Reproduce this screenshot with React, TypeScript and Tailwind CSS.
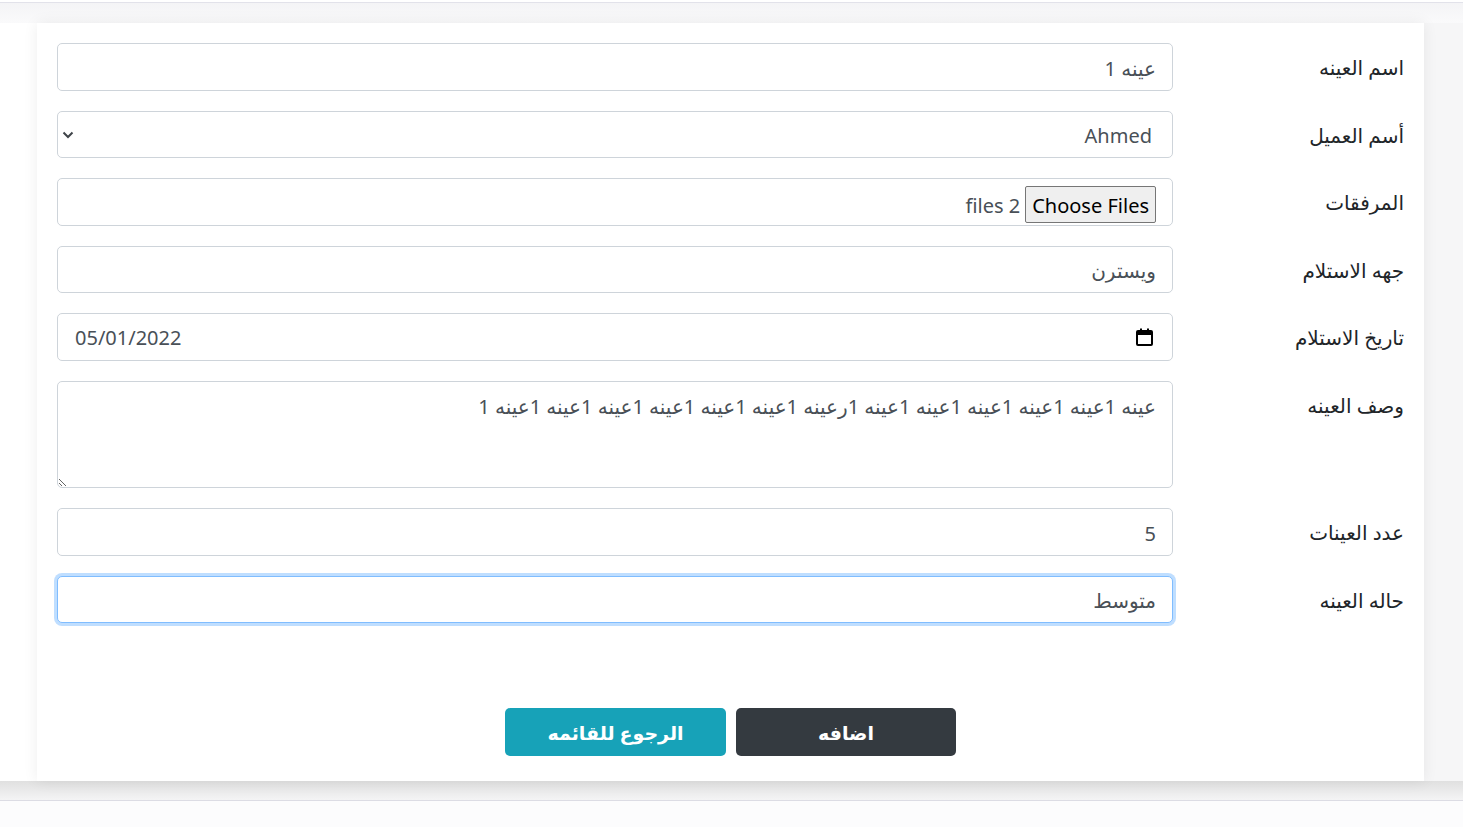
import React from "react";

const font = "font-['Segoe_UI','Noto_Sans','DejaVu_Sans',sans-serif]";
const box =
  "w-full h-[47.5px] rounded-[5px] border border-[#ced4da] bg-white text-[20px] text-[#495057] outline-none";

function Row({ label, children }: { label: string; children: React.ReactNode }) {
  return (
    <div className="flex items-start">
      <div className="w-[231px] shrink-0 h-[47.5px] pt-[3px] flex items-center text-[20px] text-[#212529]">
        {label}
      </div>
      <div className="flex-1">{children}</div>
    </div>
  );
}

const desc = Array.from({ length: 13 }, (_, i) => (i === 6 ? "رعينه 1" : "عينه 1")).join("");

export default function App() {
  return (
    <div className={`${font} min-h-[827px] bg-[#fcfcfd]`}>
      <div className="h-[2px] bg-white" />
      <div className="h-px bg-[#e2e2ea]" />
      <div className="h-[20px] bg-gradient-to-b from-[#f4f4f6] to-[#fafafb]" />
      <div className="flex">
        <div className="w-[37px] shrink-0 bg-white" />
        <div
          dir="rtl"
          className="w-[1387px] shrink-0 bg-white shadow-[0_0_14px_rgba(0,0,0,0.07)] pt-[20px] px-[20px] pb-[25px] relative z-10"
        >
          <div className="flex flex-col gap-[20px]">
            <Row label="اسم العينه">
              <input className={`${box} px-4 pt-[3px]`} defaultValue="عينه 1" />
            </Row>
            <Row label="أسم العميل">
              <div className="relative">
                <div className={`${box} px-5 pt-[3px] flex items-center`}>Ahmed</div>
                <svg
                  className="absolute left-[5px] top-[20px]"
                  width="12"
                  height="8"
                  viewBox="0 0 12 8"
                >
                  <path d="M1.5 1.5l4.5 4.5 4.5-4.5" fill="none" stroke="#3f4449" strokeWidth="2" />
                </svg>
              </div>
            </Row>
            <Row label="المرفقات">
              <div className={`${box} px-4 flex items-center gap-[5px]`}>
                <span className="mt-[6px] h-[37px] px-[6px] pt-[2px] flex items-center border border-[#767676] rounded-[2px] bg-[#efefef] text-black">
                  Choose Files
                </span>
                <span dir="ltr" className="mt-[8px]">files 2</span>
              </div>
            </Row>
            <Row label="جهه الاستلام">
              <input className={`${box} px-4 pt-[3px]`} defaultValue="ويسترن" />
            </Row>
            <Row label="تاريخ الاستلام">
              <div dir="ltr" className={`${box} pl-[17px] pr-[19px] flex items-center justify-between`}>
                <span className="mt-[3px]">05/01/2022</span>
                <svg width="17" height="18" viewBox="0 0 17 18">
                  <rect x="1" y="3" width="15" height="14" rx="1" fill="none" stroke="#000" strokeWidth="2" />
                  <rect x="1" y="3" width="15" height="4" fill="#000" />
                  <rect x="4" y="0.5" width="2" height="3" fill="#000" />
                  <rect x="11" y="0.5" width="2" height="3" fill="#000" />
                </svg>
              </div>
            </Row>
            <Row label="وصف العينه">
              <textarea
                dir="rtl"
                className="w-full h-[107.5px] block rounded-[5px] border border-[#ced4da] bg-white text-[20px] leading-[30px] text-[#495057] outline-none px-4 pt-[10px] pb-[6px] resize-y"
                defaultValue={desc}
              />
            </Row>
            <Row label="عدد العينات">
              <input className={`${box} px-4 pt-[3px]`} defaultValue="5" />
            </Row>
            <Row label="حاله العينه">
              <input
                autoFocus
                className="w-full h-[47.5px] rounded-[5px] border border-[#80bdff] bg-white text-[20px] text-[#495057] outline-none px-4 pt-[3px] shadow-[0_0_0_3px_rgba(0,123,255,0.25)]"
                defaultValue="متوسط"
              />
            </Row>
          </div>
          <div className="mt-[85px] flex justify-center gap-[10px]">
            <button className="w-[220px] h-[48px] rounded-[5px] bg-[#343a40] text-white text-[19px] font-bold pt-[2px]">
              اضافه
            </button>
            <button className="w-[221px] h-[48px] rounded-[5px] bg-[#17a2b8] text-white text-[19px] font-bold pt-[2px]">
              الرجوع للقائمه
            </button>
          </div>
        </div>
        <div className="flex-1 bg-[#f6f6f7]" />
      </div>
      <div className="h-[19px] bg-gradient-to-b from-[#e0e0e0] to-[#f4f4f5]" />
      <div className="h-px bg-[#dcdce4]" />
    </div>
  );
}
